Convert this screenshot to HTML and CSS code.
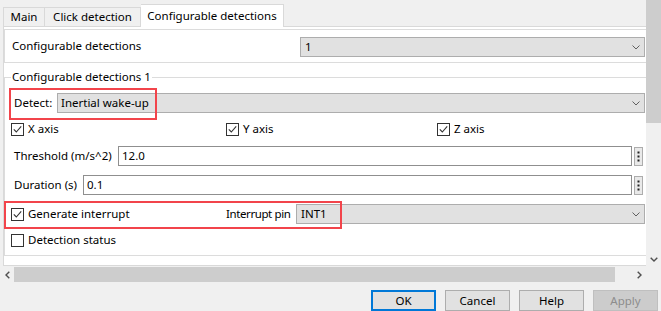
FILE: index.html
```html
<!DOCTYPE html>
<html lang="en">
<head>
    <meta charset="UTF-8">
    <title>Configurable detections</title>
    <link rel="stylesheet" href="styles.css">
</head>
<body>
    <!-- Scroll area with tabs -->
    <div class="main">
        <div class="area">
            <div class="tabs">
                <div class="tab tab-main">Main</div>
                <div class="tab tab-click">Click detection</div>
                <div class="tab tab-conf active">Configurable detections</div>
            </div>

            <div class="panel">
                <div class="frame">
                    <span class="frame-label">Configurable detections</span>
                    <div class="combo combo-count">
                        <span>1</span>
                        <svg class="chev" width="8" height="5" viewBox="0 0 8 5"><path d="M0.5 0.5 L4 4 L7.5 0.5" fill="none" stroke="#606060" stroke-width="1"/></svg>
                    </div>
                </div>

                <div class="group">
                    <div class="group-title">Configurable detections 1</div>

                    <div class="row row-detect">
                        <span class="lbl lbl-detect">Detect:</span>
                        <div class="combo">
                            <span>Inertial wake-up</span>
                            <svg class="chev" width="8" height="5" viewBox="0 0 8 5"><path d="M0.5 0.5 L4 4 L7.5 0.5" fill="none" stroke="#606060" stroke-width="1"/></svg>
                        </div>
                        <div class="mark mark-detect"></div>
                    </div>

                    <div class="row row-axes">
                        <label class="check"><svg width="13" height="13" viewBox="0 0 13 13"><rect x="0.5" y="0.5" width="12" height="12" fill="#fff" stroke="#333"/><path d="M2.8 6.4 L5.3 9 L10.2 3.4" fill="none" stroke="#333" stroke-width="1.1"/></svg>X axis</label>
                        <label class="check"><svg width="13" height="13" viewBox="0 0 13 13"><rect x="0.5" y="0.5" width="12" height="12" fill="#fff" stroke="#333"/><path d="M2.8 6.4 L5.3 9 L10.2 3.4" fill="none" stroke="#333" stroke-width="1.1"/></svg>Y axis</label>
                        <label class="check"><svg width="13" height="13" viewBox="0 0 13 13"><rect x="0.5" y="0.5" width="12" height="12" fill="#fff" stroke="#333"/><path d="M2.8 6.4 L5.3 9 L10.2 3.4" fill="none" stroke="#333" stroke-width="1.1"/></svg>Z axis</label>
                    </div>

                    <div class="row row-field">
                        <span class="lbl lbl-threshold">Threshold (m/s^2)</span>
                        <div class="edit">12.0</div>
                        <div class="spin"><svg width="3" height="11" viewBox="0 0 3 11"><rect x="0.5" y="0.5" width="2" height="2" fill="#222"/><rect x="0.5" y="4.5" width="2" height="2" fill="#222"/><rect x="0.5" y="8.5" width="2" height="2" fill="#222"/></svg></div>
                    </div>

                    <div class="row row-field">
                        <span class="lbl lbl-duration">Duration (s)</span>
                        <div class="edit">0.1</div>
                        <div class="spin"><svg width="3" height="11" viewBox="0 0 3 11"><rect x="0.5" y="0.5" width="2" height="2" fill="#222"/><rect x="0.5" y="4.5" width="2" height="2" fill="#222"/><rect x="0.5" y="8.5" width="2" height="2" fill="#222"/></svg></div>
                    </div>

                    <div class="row row-int">
                        <label class="check check-int"><svg width="13" height="13" viewBox="0 0 13 13"><rect x="0.5" y="0.5" width="12" height="12" fill="#fff" stroke="#333"/><path d="M2.8 6.4 L5.3 9 L10.2 3.4" fill="none" stroke="#333" stroke-width="1.1"/></svg>Generate interrupt</label>
                        <span class="lbl lbl-pin">Interrupt pin</span>
                        <div class="combo">
                            <span>INT1</span>
                            <svg class="chev" width="8" height="5" viewBox="0 0 8 5"><path d="M0.5 0.5 L4 4 L7.5 0.5" fill="none" stroke="#606060" stroke-width="1"/></svg>
                        </div>
                        <div class="mark mark-int"></div>
                    </div>

                    <div class="row row-status">
                        <label class="check"><svg width="13" height="13" viewBox="0 0 13 13"><rect x="0.5" y="0.5" width="12" height="12" fill="#fff" stroke="#333"/></svg>Detection status</label>
                    </div>
                </div>
            </div>
        </div>

        <!-- Vertical scrollbar -->
        <div class="vscroll">
            <div class="vthumb"></div>
            <svg class="vdown" width="8" height="5" viewBox="0 0 8 5"><path d="M0.7 0.7 L4 4 L7.3 0.7" fill="none" stroke="#505050" stroke-width="1.4"/></svg>
        </div>
    </div>

    <!-- Horizontal scrollbar -->
    <div class="hscroll">
        <div class="harrow"><svg width="5" height="8" viewBox="0 0 5 8"><path d="M4.3 0.7 L1 4 L4.3 7.3" fill="none" stroke="#505050" stroke-width="1.4"/></svg></div>
        <div class="htrack"><div class="hthumb"></div></div>
        <div class="harrow"><svg width="5" height="8" viewBox="0 0 5 8"><path d="M0.7 0.7 L4 4 L0.7 7.3" fill="none" stroke="#505050" stroke-width="1.4"/></svg></div>
        <div class="corner"></div>
    </div>

    <!-- Dialog buttons -->
    <div class="buttons">
        <button class="btn btn-default">OK</button>
        <button class="btn">Cancel</button>
        <button class="btn">Help</button>
        <button class="btn" disabled>Apply</button>
    </div>
</body>
</html>
```

FILE: styles.css
```css
/* Basic dialog look */
body {
    margin: 0;
    width: 661px;
    height: 311px;
    overflow: hidden;
    background: #f0f0f0;
    font-family: "Noto Sans", "Open Sans", sans-serif;
    font-size: 11.5px;
    line-height: 16px;
    color: #000;
}

.main {
    display: flex;
    height: 267px;
}

.area {
    flex: 1;
    padding-left: 3px;
    min-width: 0;
}

/* Tabs */
.tabs {
    display: flex;
    align-items: flex-end;
    height: 26px;
}

.tab {
    box-sizing: border-box;
    height: 19px;
    border: 1px solid #d9d9d9;
    border-bottom: none;
    background: #f0f0f0;
    text-align: center;
    line-height: 18px;
    white-space: nowrap;
}

.tab-main { width: 42px; }
.tab-click { width: 96px; border-left: none; }

.tab.active {
    position: relative;
    width: 143px;
    height: 23px;
    margin-bottom: -1px;
    background: #fff;
    line-height: 21px;
}

.tab-conf { border-left: none; }

.panel {
    height: 238px;
    border-top: 1px solid #d9d9d9;
    border-left: 1px solid #d9d9d9;
    border-bottom: 1px solid #d9d9d9;
    background: #fff;
    overflow: hidden;
}

/* Top frame */
.frame {
    display: flex;
    align-items: center;
    height: 32px;
    margin-top: 2px;
    border: 1px solid #dcdcdc;
    border-right: none;
    padding-left: 7px;
}

.frame-label { width: 288px; }

.combo {
    position: relative;
    box-sizing: border-box;
    display: flex;
    align-items: center;
    flex: 1;
    height: 20px;
    margin-right: 1px;
    padding-left: 4px;
    background: #e1e1e1;
    border: 1px solid #adadad;
}

.combo .chev {
    position: absolute;
    right: 4px;
    top: 7px;
}

.combo-count { margin-top: 1px; }

/* Group box */
.group {
    margin-top: 14px;
    border: 1px solid #dcdcdc;
    border-right: none;
    padding-bottom: 7px;
}

.group-title {
    width: fit-content;
    margin: -9px 0 0 6px;
    padding: 0 1px;
    background: #fff;
}

.row {
    position: relative;
    display: flex;
    align-items: center;
    height: 20px;
    padding-left: 9px;
}

.lbl { white-space: nowrap; flex: none; }
.lbl-detect { width: 43px; }
.lbl-threshold { width: 104px; }
.lbl-duration { width: 69px; }
.lbl-pin { width: 70px; letter-spacing: -0.4px; }

.row-detect { margin-top: 8px; }
.row-detect .combo { padding-left: 3px; }

.check {
    display: flex;
    align-items: center;
    gap: 4px;
    white-space: nowrap;
}

.row-axes {
    display: grid;
    grid-template-columns: 215px 211px auto;
    height: 16px;
    margin-top: 8px;
    padding-left: 6px;
}

.row-field { margin-top: 9px; }

.edit {
    box-sizing: border-box;
    flex: 1;
    height: 20px;
    padding-left: 3px;
    border: 1px solid #8f8f8f;
    line-height: 18px;
}

.spin {
    box-sizing: border-box;
    display: flex;
    align-items: center;
    justify-content: center;
    width: 9px;
    height: 19px;
    margin: 0 3px 0 2px;
    background: #e9e9e9;
    border: 1px solid #adadad;
}

.row-int {
    margin-top: 9px;
    padding-left: 6px;
}

.check-int { width: 215px; flex: none; }
.row-int .combo { padding-left: 4px; }

.row-status {
    height: 16px;
    margin-top: 8px;
    padding-left: 6px;
}

/* Red annotation boxes */
.mark {
    position: absolute;
    box-sizing: border-box;
    border: 2px solid #f2444b;
}

.mark-detect {
    left: 4px;
    top: -5px;
    width: 148px;
    height: 32px;
}

.mark-int {
    left: -1px;
    top: -3px;
    width: 338px;
    height: 28px;
}

/* Scrollbars */
.vscroll {
    position: relative;
    width: 15px;
}

.vthumb {
    height: 123px;
    background: #cdcdcd;
}

.vdown {
    position: absolute;
    left: 4px;
    top: 257px;
}

.hscroll {
    display: flex;
    height: 15px;
}

.harrow {
    display: flex;
    align-items: center;
    justify-content: center;
    width: 14px;
}

.htrack {
    flex: 1;
}

.hthumb {
    width: 601px;
    height: 15px;
    background: #cdcdcd;
}

.corner { width: 15px; }

/* Buttons */
.buttons {
    display: flex;
    justify-content: flex-end;
    gap: 9px;
    margin-top: 8px;
    padding-right: 3px;
}

.btn {
    box-sizing: border-box;
    width: 65px;
    height: 21px;
    padding: 0;
    background: #e1e1e1;
    border: 1px solid #adadad;
    font-family: inherit;
    font-size: 11.5px;
    color: #000;
}

.btn-default {
    border-color: #0078d7;
    box-shadow: inset 0 0 0 1px #0078d7;
}

.btn:disabled {
    background: #cccccc;
    border-color: #bfbfbf;
    color: #8d8d8d;
}
```
